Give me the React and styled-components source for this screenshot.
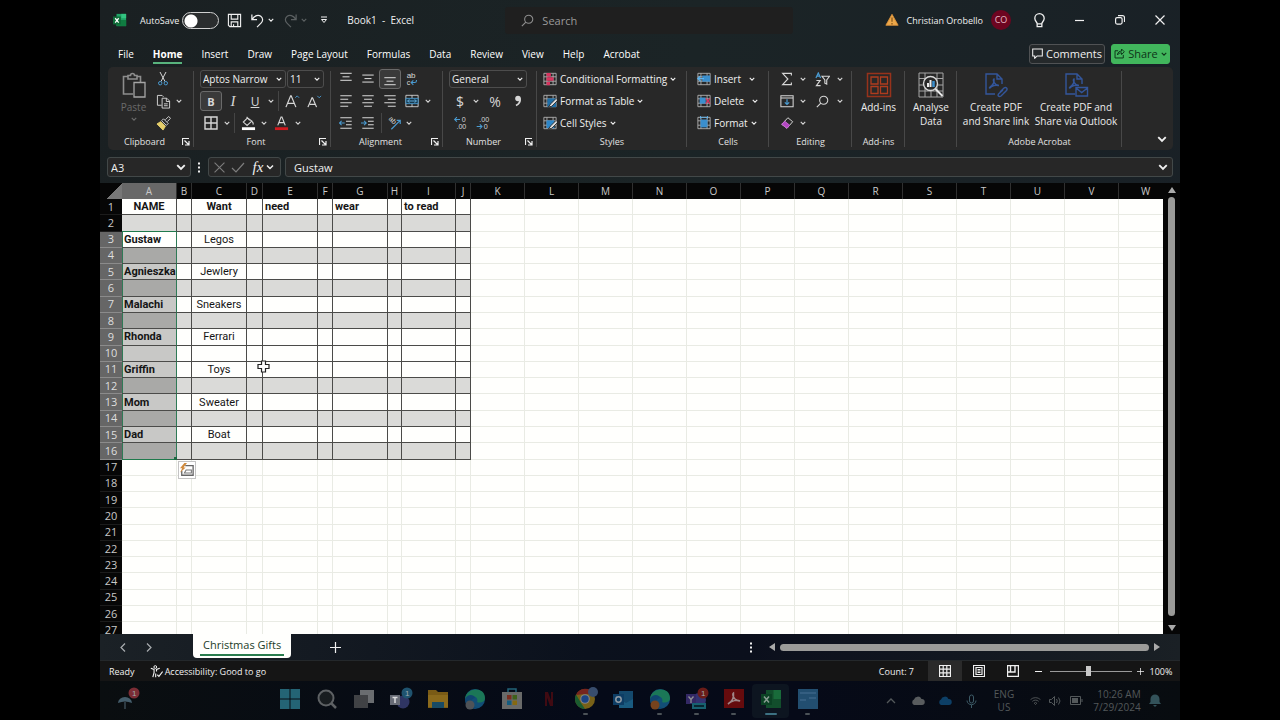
import React from "react";
import styled, { createGlobalStyle, css } from "styled-components";

const COLUMNS = [
  ["A", 55],
  ["B", 15],
  ["C", 55],
  ["D", 16],
  ["E", 55],
  ["F", 15],
  ["G", 55],
  ["H", 14],
  ["I", 54],
  ["J", 15],
  ..."KLMNOPQRSTUVW".split("").map((letter) => [letter, 54]),
];

const CELLS = {
  A1: "NAME",
  C1: "Want",
  E1: "need",
  G1: "wear",
  I1: "to read",
  A3: "Gustaw",
  C3: "Legos",
  A5: "Agnieszka",
  C5: "Jewlery",
  A7: "Malachi",
  C7: "Sneakers",
  A9: "Rhonda",
  C9: "Ferrari",
  A11: "Griffin",
  C11: "Toys",
  A13: "Mom",
  C13: "Sweater",
  A15: "Dad",
  C15: "Boat",
};

const ROWS = Array.from({ length: 27 }, (_, i) => i + 1);
const LAST_ROW = 16;
const isBanded = (row) => row % 2 === 0 && row !== 10 && row <= LAST_ROW;
const isSelected = (row) => row >= 3 && row <= LAST_ROW;

const TABS = [
  "File",
  "Home",
  "Insert",
  "Draw",
  "Page Layout",
  "Formulas",
  "Data",
  "Review",
  "View",
  "Help",
  "Acrobat",
];

/* ---------- icons ---------- */

const Icon = ({ size = 16, w, h, box = "0 0 16 16", children }) => (
  <svg
    width={w || size}
    height={h || size}
    viewBox={box}
    fill="none"
    stroke="currentColor"
    strokeWidth="1"
    aria-hidden="true"
  >
    {children}
  </svg>
);

const Chevron = ({ size = 6 }) => (
  <Icon size={size} box="0 0 8 8">
    <path d="M1 2.500l3 3 3-3" strokeWidth="1.500" />
  </Icon>
);

const ExcelIcon = ({ size = 14 }) => (
  <Icon size={size}>
    <g stroke="none">
      <path d="M4 1h11v14H4z" fill="#21a366" />
      <path d="M9.500 1H15v5H9.500z" fill="#33c481" />
      <path d="M4 8h11v7H4z" fill="#107c41" />
      <path d="M0 4h9v9H0z" fill="#0e6b38" />
    </g>
    <path d="M2.500 6l4 5M6.500 6l-4 5" stroke="#fff" strokeWidth="1.400" />
  </Icon>
);

const SaveIcon = () => (
  <Icon size={15}>
    <path d="M1.500 1.500h13v13H3l-1.500-1.500zM4.500 1.500v5h7v-5M4.500 14.500v-5h7v5M7 14.500v-2.500" strokeWidth="1.200" />
  </Icon>
);

const UndoIcon = ({ flip }) => (
  <Icon size={15}>
    <g transform={flip ? "translate(16 0) scale(-1 1)" : undefined}>
      <path d="M2 1.500v5.500h5.500M2.500 6.500C5 2.500 9 1.500 11.500 3.500s2.500 5 .5 7l-4.500 4.500" strokeWidth="1.300" />
    </g>
  </Icon>
);

const CustomizeIcon = () => (
  <Icon size={8} box="0 0 8 8">
    <path d="M1 1h6M1.500 3.500h5L4 6.500z" />
  </Icon>
);

const SearchIcon = ({ size = 13, flip }) => (
  <Icon size={size}>
    <g transform={flip ? "translate(16 0) scale(-1 1)" : undefined}>
      <circle cx="6.500" cy="6.500" r="5" strokeWidth="1.300" />
      <path d="M10 10l5 5" strokeWidth="1.400" />
    </g>
  </Icon>
);

const WarningIcon = () => (
  <Icon size={14}>
    <path d="M8 1.500L15 14H1z" fill="#eda84a" stroke="#d9913a" />
    <path d="M8 5v5M8 11.500V13" stroke="#8a5a1c" strokeWidth="1.500" />
  </Icon>
);

const BulbIcon = () => (
  <Icon size={15}>
    <path d="M5.500 11.500C5.500 9.500 3 9 3 5.700a5 5 0 0 1 10 0c0 3.300-2.500 3.800-2.500 5.800zM5.500 12v2.500h5V12" strokeWidth="1.400" />
  </Icon>
);

const MinimizeIcon = () => (
  <Icon size={10} box="0 0 10 10">
    <path d="M0 5.500h9" strokeWidth="1.200" />
  </Icon>
);

const RestoreIcon = () => (
  <Icon size={10} box="0 0 10 10">
    <rect x="0.600" y="2.600" width="6.500" height="6.500" rx="1.500" strokeWidth="1.200" />
    <path d="M3 .7h4.500a2 2 0 0 1 2 2V7" strokeWidth="1.200" />
  </Icon>
);

const CloseIcon = () => (
  <Icon size={10} box="0 0 10 10">
    <path d="M.5.500l9 9M9.500.500l-9 9" strokeWidth="1.200" />
  </Icon>
);

const CommentIcon = () => (
  <Icon size={11}>
    <path d="M1 1.500h14v10H7.500L4 15v-3.500H1z" strokeWidth="1.500" />
  </Icon>
);

const ShareIcon = () => (
  <Icon size={11}>
    <path d="M6 4H1.500v10.500h12V10M5 10c.5-4 3-5.500 6-5.500V1.500L15 5.500 11 9.500V7C8.500 7 6.500 8 5 10z" strokeWidth="1.400" />
  </Icon>
);

const PasteIcon = () => (
  <Icon w={24} h={26} box="0 0 24 26">
    <path d="M11 22H1.500V4.500H6M15 4.500h3.500V10M6 7V3.500h2.500a2 2 0 0 1 4 0H15V7z" stroke="#8d8d8d" strokeWidth="1.600" />
    <path d="M12 10.500h11V25H12z" stroke="#a5a5a5" strokeWidth="1.300" />
  </Icon>
);

const CutIcon = () => (
  <Icon w={10} h={14} box="0 0 10 14">
    <path d="M2 0l5 9.500M8 0L3 9.500" />
    <circle cx="2.200" cy="11.200" r="1.700" stroke="#4a9bd1" />
    <circle cx="7.800" cy="11.200" r="1.700" stroke="#4a9bd1" />
  </Icon>
);

const CopyIcon = () => (
  <Icon size={15}>
    <path d="M6 12H1.500V1.500h5L8 3M6.500 4.500h5l3 3v7.500h-8zM11 4.500V8h3.500M8.500 10.500h4M8.500 12.500h4" />
  </Icon>
);

const PainterIcon = () => (
  <Icon size={15}>
    <path d="M1 8.500l4-2.500 5 5-2.500 4z" fill="#e6cf6b" stroke="#e6cf6b" />
    <path d="M6 5l2-2 5 5-2 2zM10 4l3.500-3.500 2 2L12 6" />
  </Icon>
);

const LauncherIcon = () => (
  <Icon size={8} box="0 0 8 8">
    <path d="M7 .5H.5V7M2.500 2.500l4 4M7 3v4H3" strokeWidth="1.200" />
  </Icon>
);

const BorderIcon = () => (
  <Icon size={14} box="0 0 14 14">
    <path d="M1 1h12v12H1zM7 1v12M1 7h12" strokeWidth="1.400" />
  </Icon>
);

const FillIcon = () => (
  <Icon size={15}>
    <path d="M7 2L2.500 6.500 6.500 10l5-4.500zM6 1l3 3.500M12 6c1 1.500 1.500 2.500.500 3" strokeWidth="1.200" />
    <path d="M1 13.500h14" stroke="#fff" strokeWidth="3" />
  </Icon>
);

const FontColorIcon = () => (
  <Icon size={15}>
    <path d="M4 10L7.500 1h1L12 10M5.500 7h5" strokeWidth="1.200" />
    <path d="M1 13.500h14" stroke="#d11a1f" strokeWidth="3" />
  </Icon>
);

const FontSizeIcon = ({ grow }) => (
  <Icon size={15}>
    {grow ? (
      <path d="M1 14L6 2h.6l5 12M3 10h6.500" strokeWidth="1.300" />
    ) : (
      <path d="M1 14L5.300 4h.6l4.300 10M3 11h5.500" strokeWidth="1.300" />
    )}
    <path d={grow ? "M11 4l2-2 2 2" : "M11 2l2 2 2-2"} stroke="#4a9bd1" />
  </Icon>
);

// y of each line of text in the alignment icons
const LINES = {
  top: [1.5, 5.5, 9.5],
  middle: [3.5, 7.5, 11.5],
  bottom: [6.5, 10.5, 14.5],
};

const VAlignIcon = ({ at }) => (
  <Icon size={14}>
    {LINES[at].map((y, i) => (
      <path key={y} d={i === 1 ? `M4 ${y}h8` : `M1.500 ${y}h13`} strokeWidth="1.200" />
    ))}
  </Icon>
);

const HAlignIcon = ({ x }) => (
  <Icon size={14}>
    <path d={`M1.500 2h13M${x} 6h9M1.500 10h13M${x} 14h9`} strokeWidth="1.200" />
  </Icon>
);

const IndentIcon = ({ right }) => (
  <Icon size={14}>
    <path d="M1.500 2h13M8 6h6.500M8 10h6.500M1.500 14h13" strokeWidth="1.200" />
    <path d={right ? "M0 8h6M3.500 5.500L6 8l-2.500 2.500" : "M6.500 8h-6M3 5.500L.500 8 3 10.500"} stroke="#4a9bd1" strokeWidth="1.200" />
  </Icon>
);

const SvgText = styled.text`
  font-family: "Liberation Sans", sans-serif;
  font-size: ${(p) => p.$size}px;
  fill: currentColor;
  stroke: none;
`;

const WrapIcon = () => (
  <Icon w={14} h={16} box="0 0 14 18">
    <SvgText x="1" y="8" $size={9}>ab</SvgText>
    <SvgText x="1" y="16" $size={8}>c</SvgText>
    <path d="M12 10v1q0 2-2 2H6M8.500 10.500L6 13l2.500 2.500" stroke="#4a9bd1" strokeWidth="1.200" />
  </Icon>
);

const MergeIcon = () => (
  <Icon size={14}>
    <path d="M1 1.500h14v13H1zM8 1.500V5M8 11v3.500" />
    <path d="M1 5h14v6H1z" stroke="#4a9bd1" fill="#17384c" />
    <path d="M3 8h10M5 6L3 8l2 2M11 6l2 2-2 2" stroke="#6ab9ec" />
  </Icon>
);

const OrientationIcon = () => (
  <Icon size={16} box="0 0 18 18">
    <g transform="rotate(45 6 7)">
      <SvgText x="2" y="8" $size={8}>ab</SvgText>
    </g>
    <path d="M6 16L16 6M12 6h4v4" stroke="#4a9bd1" strokeWidth="1.300" />
  </Icon>
);

const DecimalIcon = ({ more }) => (
  <Icon size={16} box="0 0 16 18">
    <SvgText x={more ? 10 : 5} y="8" $size={8}>{more ? "0" : ".00"}</SvgText>
    <SvgText x={more ? 4 : 10} y="16" $size={8}>{more ? ".00" : "0"}</SvgText>
    <path d={more ? "M8 5H2M4.500 2.500L2 5l2.500 2.500" : "M2 13h6M5.500 10.500L8 13l-2.500 2.500"} stroke="#4a9bd1" strokeWidth="1.200" />
  </Icon>
);

const CommaIcon = () => (
  <Icon w={8} h={12} box="0 0 8 12">
    <circle cx="4" cy="3.500" r="2.800" fill="currentColor" stroke="none" />
    <path d="M6 3.500c.5 3-1 5.500-4 7" strokeWidth="1.800" />
  </Icon>
);

const GRID_MARKS = {
  conditional: <path d="M4 1h5v4H4zM4 6h8v4H4zM4 11h4v4H4z" fill="#d8345f" stroke="none" />,
  table: (
    <>
      <path d="M5 5h10v10H5z" fill="#1f6fa8" stroke="none" />
      <path d="M15 5L9 11l-3 4 4-1 6-6" fill="#ddd" stroke="#282828" />
    </>
  ),
  styles: (
    <>
      <path d="M4 5h9v9H4z" fill="#2d86c8" stroke="none" />
      <path d="M15 5L9 11l-3 4 4-1 6-6" fill="#ddd" stroke="#282828" />
    </>
  ),
  insert: (
    <>
      <path d="M6 4h9v7H6z" fill="#3b8fce" stroke="none" />
      <path d="M8 7.500H1M4 4.500l-3 3 3 3" stroke="#5fb4ee" strokeWidth="1.500" />
    </>
  ),
  remove: (
    <>
      <path d="M3 4h7v7H3z" fill="#3b8fce" stroke="none" />
      <path d="M10 5l5 6M15 5l-5 6" stroke="#d8345f" strokeWidth="1.400" />
    </>
  ),
  format: (
    <>
      <path d="M4 4h8v9H4z" fill="#3b8fce" stroke="none" />
      <path d="M4 0v3M12 0v3M4 1.500h8" stroke="#5fb4ee" />
    </>
  ),
};

const GridIcon = ({ kind }) => (
  <Icon size={14}>
    <path d="M1 1.500h14v13H1zM1 5.500h14M1 10.500h14M4.500 1.500v13M11.500 1.500v13" stroke="#b5b5b5" />
    {GRID_MARKS[kind]}
  </Icon>
);

const SumIcon = () => (
  <Icon size={14}>
    <path d="M13 4V1.500H3L9 8l-6 6.500h10V12" strokeWidth="1.300" />
  </Icon>
);

const FillDownIcon = () => (
  <Icon size={14}>
    <path d="M1 2h14v12.500H1zM1 4.500h14" strokeWidth="1.200" />
    <path d="M8 6v6M5.500 9.500L8 12l2.500-2.500" stroke="#4a9bd1" strokeWidth="1.400" />
  </Icon>
);

const EraserIcon = () => (
  <Icon size={14}>
    <path d="M9 2l5.500 4.500L8 14 2 9.500z" strokeWidth="1.100" />
    <path d="M5.500 6L11 10.500 8 14 2 9.500z" fill="#b347c2" stroke="#c869d4" />
  </Icon>
);

const SortIcon = () => (
  <Icon size={15}>
    <path d="M1 6.500L3.500 1 6 6.500M2 4.500h3" stroke="#4a9bd1" strokeWidth="1.300" />
    <path d="M1.500 9h4l-4 5.500h4.500M7.500 4.500h8l-3 4v4.500l-2-1v-3.500z" strokeWidth="1.200" />
  </Icon>
);

const AddInsIcon = () => (
  <Icon size={26} box="0 0 26 26">
    <path d="M1.500 1.500h23v23h-23z" stroke="#97321b" strokeWidth="1.500" />
    <path d="M5 5h7v7H5zM14.500 5h7v7h-7zM5 14.500h7v7H5zM14.500 14.500h7v7h-7z" stroke="#b03c1e" strokeWidth="1.300" />
  </Icon>
);

const AnalyseIcon = () => (
  <Icon size={26} box="0 0 26 26">
    <path d="M1 1h24v24H1zM1 6.500h24M1 13h24M1 19h24M7 1v24M19 1v24M13 19v6" stroke="#a5a5a5" />
    <circle cx="12.500" cy="11.500" r="7" fill="#282828" stroke="#d8d8d8" strokeWidth="1.400" />
    <path d="M10 15v-4M12.500 15V8" strokeWidth="2" />
    <path d="M15.500 15V9" stroke="#3b8fce" strokeWidth="2.500" />
    <path d="M17.500 17l7 7" stroke="#e8e8e8" strokeWidth="2" />
  </Icon>
);

const PdfIcon = ({ mail }) => (
  <Icon size={26} box="0 0 26 26">
    <g stroke="#33569b" strokeWidth="1.400">
      <path d="M12 22H3V2h11l5 5v5M14 2v5h5" />
      <path d="M7 15c3-2 4.500-5 4-8-1.500 0-.500 6 5 6.500M7 15c-1.500 1.500.5 1.500 1.500-.500 2-1 5-1.500 7-1" />
      {mail ? (
        <path d="M13 15.500h11.500V24H13zM13 16l5.700 4.500 5.800-4.500" />
      ) : (
        <path d="M17 20l4-4c2-1.500 4 .5 2.500 2.500L20 22M20 18l-4 3.500c-2 2 0 4 2 2.500l3-3" />
      )}
    </g>
  </Icon>
);

const CancelIcon = () => (
  <Icon size={11} box="0 0 10 10">
    <path d="M.5.500l9 9M9.500.500l-9 9" stroke="#7d7d7d" />
  </Icon>
);

const CheckIcon = () => (
  <Icon w={14} h={11} box="0 0 14 11">
    <path d="M1 6l4 4 8-9" stroke="#7d7d7d" strokeWidth="1.200" />
  </Icon>
);

const DotsIcon = () => (
  <Icon w={3} h={11} box="0 0 3 11">
    <path d="M0 1.500h2M0 5.500h2M0 9.500h2" strokeWidth="2" />
  </Icon>
);

const PlusIcon = ({ size = 11 }) => (
  <Icon size={size} box="0 0 11 11">
    <path d="M5.500 0v11M0 5.500h11" strokeWidth="1.200" />
  </Icon>
);

const AngleIcon = ({ right }) => (
  <Icon w={6} h={9} box="0 0 6 9">
    <path d={right ? "M1 .5l4 4-4 4" : "M5 .5l-4 4 4 4"} strokeWidth="1.200" />
  </Icon>
);

const AccessibilityIcon = () => (
  <Icon size={13}>
    <circle cx="6.500" cy="2.500" r="1.700" strokeWidth="1.200" />
    <path d="M1 4l4 1.500v4L3.500 15M12 4L8 5.500V8M7 10.500v4.500M9 12l2 2 4.500-6" strokeWidth="1.400" />
  </Icon>
);

const NormalViewIcon = () => (
  <Icon size={12} box="0 0 12 12">
    <path d="M.5.500h11v11H.500zM.500 4.200h11M.500 7.800h11M4.200.500v11M7.800.500v11" strokeWidth="1.200" />
  </Icon>
);

const PageViewIcon = () => (
  <Icon size={12} box="0 0 12 12">
    <path d="M.5.500h11v11H.500zM3 2.500h6v7H3zM4.500 4.500h3M4.500 6h3M4.500 7.500h3" strokeWidth="1.200" />
  </Icon>
);

const BreakViewIcon = () => (
  <Icon size={12} box="0 0 12 12">
    <path d="M.5.500h11v11H.500zM3.500.500V7H8V.500M.500 7h3" strokeWidth="1.400" />
  </Icon>
);

const QuickIcon = () => (
  <Icon size={14}>
    <path d="M6 3h9v11H2V9" stroke="#666" strokeWidth="1.500" />
    <path d="M5 11.500l2-3.500h6v3.500z" stroke="#777" strokeWidth="1.200" />
    <path d="M5 0L0 6h2.500L0 11l6.500-6H4L8 0z" fill="#d08a3c" stroke="none" />
  </Icon>
);

const CrossIcon = () => (
  <Icon size={13} box="0 0 13 13">
    <path d="M4.500 1h4v3.500H12v4H8.500V12h-4V8.500H1v-4h3.500z" fill="#fff" stroke="#222" strokeWidth="1.200" />
  </Icon>
);

/* ---------- taskbar icons ---------- */

const Badge = ({ x, fill, children }) => (
  <>
    <circle cx={x} cy="6" r="5.500" fill={fill} stroke="none" />
    <SvgText x={x - 2} y="9" $size={8}>{children}</SvgText>
  </>
);

const TaskSvg = ({ children }) => (
  <Icon size={24} box="0 0 24 24">
    <g stroke="none">{children}</g>
  </Icon>
);

const WeatherIcon = () => (
  <TaskSvg>
    <path d="M1 16a7 6 0 0 1 14 0q-7-3-14 0z" fill="#4f6b7b" />
    <path d="M7 14h2v8H7z" fill="#34424b" />
    <Badge x={17} fill="#8f333c">1</Badge>
  </TaskSvg>
);

const EdgeIcon = ({ mark }) => (
  <TaskSvg>
    <circle cx="12" cy="12" r="10" fill="#155a87" />
    <path d="M2 12C3 0 22-1 22 11c0 5-6 5-8 4 2-4-3-9-12-3z" fill="#1f8a63" />
    <path d="M2 12c2-5 9-5 10-1-5 1-5 7 2 10C7 23 2 19 2 12z" fill="#12507f" />
    <circle cx="7" cy="18" r="4.500" fill={mark} />
  </TaskSvg>
);

const TASKS = [
  {
    name: "Start",
    icon: (
      <TaskSvg>
        <path d="M2 2h9.500v9.500H2zM12.500 2H22v9.500h-9.500zM2 12.500h9.500V22H2zM12.500 12.500H22V22h-9.500z" fill="#2a7487" />
      </TaskSvg>
    ),
  },
  {
    name: "Search",
    icon: (
      <TaskSvg>
        <circle cx="11" cy="11" r="7.500" fill="#1c2023" stroke="#6d7072" strokeWidth="2" />
        <path d="M16 16l5 5" stroke="#6d7072" strokeWidth="2.500" />
      </TaskSvg>
    ),
  },
  {
    name: "Task View",
    icon: (
      <TaskSvg>
        <path d="M8 3h14v13H8z" fill="#7c7f81" />
        <path d="M2 8h14v13H2z" fill="#4b4c4e" />
      </TaskSvg>
    ),
  },
  {
    name: "Teams",
    icon: (
      <TaskSvg>
        <circle cx="14" cy="15" r="6.500" fill="#373d71" />
        <path d="M1 8h10v10H1z" fill="#7a7d88" />
        <path d="M3.500 10.500h5M6 10.500V16" stroke="#fff" strokeWidth="1.500" />
        <Badge x={18} fill="#24607f">1</Badge>
      </TaskSvg>
    ),
  },
  {
    name: "File Explorer",
    icon: (
      <TaskSvg>
        <path d="M2 3h8l2 2h10v16H2z" fill="#8f6916" />
        <path d="M2 8h20v12H2z" fill="#a37b1e" />
        <path d="M6 15h12v6H6z" fill="#1c5672" />
      </TaskSvg>
    ),
  },
  { name: "Edge", icon: <EdgeIcon mark="#5c6063" /> },
  {
    name: "Microsoft Store",
    icon: (
      <TaskSvg>
        <path d="M8 5V2h8v3" stroke="#28748a" strokeWidth="1.500" />
        <path d="M2 5h20v17H2z" fill="#7b7b78" />
        <path d="M7 8h4.500v4.500H7z" fill="#8e3320" />
        <path d="M12.500 8H17v4.500h-4.500z" fill="#49701c" />
        <path d="M7 13.500h4.500V18H7z" fill="#176b93" />
        <path d="M12.500 13.500H17V18h-4.500z" fill="#9c7a10" />
      </TaskSvg>
    ),
  },
  {
    name: "Netflix",
    icon: (
      <TaskSvg>
        <path d="M8 5h3l5 14h-3zM8 5h2v14H8zM14 5h2v14h-2z" fill="#4b0b12" />
      </TaskSvg>
    ),
  },
  {
    name: "Chrome",
    open: true,
    icon: (
      <TaskSvg>
        <circle cx="11" cy="12" r="10" fill="#8d7118" />
        <path d="M2 8a10 10 0 0 1 18-1H11z" fill="#8a2a20" />
        <path d="M2 7.500l5 8.500 4 5.900A10 10 0 0 1 2 7.500z" fill="#1e6b35" />
        <circle cx="11" cy="12" r="4.800" fill="#999" />
        <circle cx="11" cy="12" r="3.700" fill="#1f4f98" />
        <circle cx="19" cy="5" r="5" fill="#42597c" />
      </TaskSvg>
    ),
  },
  {
    name: "Outlook",
    icon: (
      <TaskSvg>
        <path d="M8 4h14v16H8z" fill="#17557c" />
        <path d="M8 12l7 4 7-4v9H8z" fill="#1d6a93" />
        <path d="M2 7h11v11H2z" fill="#0f4673" />
        <circle cx="7.500" cy="12.500" r="2.700" stroke="#a9b4bd" strokeWidth="1.500" />
      </TaskSvg>
    ),
  },
  { name: "Edge Profile", open: true, icon: <EdgeIcon mark="#8a4e1e" /> },
  {
    name: "Teams New",
    open: true,
    icon: (
      <TaskSvg>
        <circle cx="14" cy="13" r="7" fill="#3c3a80" />
        <path d="M1 7h10v10H1z" fill="#3c2e72" />
        <path d="M3.500 9.500l2.500 3 2.500-3M6 12v4" stroke="#aaa" strokeWidth="1.300" />
        <path d="M7 16h14v6H7z" fill="#1b7180" />
        <path d="M9 19h10" stroke="#0a2c35" strokeWidth="2" />
        <Badge x={18} fill="#7c2019">1</Badge>
      </TaskSvg>
    ),
  },
  {
    name: "Acrobat",
    open: true,
    icon: (
      <TaskSvg>
        <path d="M2 2h20v19H2z" fill="#760c0c" />
        <path d="M6 17c5-3 6-7 5.500-11C9.500 7 12 14 18 14c-3-1.500-8-.500-12 3z" stroke="#bb9d9d" strokeWidth="1.500" />
      </TaskSvg>
    ),
  },
  {
    name: "Excel",
    open: true,
    current: true,
    icon: (
      <TaskSvg>
        <path d="M7 3h15v18H7z" fill="#14592f" />
        <path d="M14.500 3H22v9h-7.500z" fill="#1c7a3f" />
        <path d="M2 7h11v11H2z" fill="#0b4a25" />
        <path d="M5 9.500l5 6M10 9.500l-5 6" stroke="#9db3a5" strokeWidth="1.500" />
      </TaskSvg>
    ),
  },
  {
    name: "Notes",
    open: true,
    icon: (
      <TaskSvg>
        <path d="M2 2h20v20H2z" fill="#275a80" />
        <path d="M4 13h6M13 11h7M4 6h16" stroke="#46749a" strokeWidth="1.500" />
      </TaskSvg>
    ),
  },
];

/* ---------- page ---------- */

const GlobalStyle = createGlobalStyle`
  * {
    box-sizing: border-box;
  }
  body {
    margin: 0;
    background: #000;
    color: #f0f0f0;
    font-family: "Open Sans", "Noto Sans", sans-serif;
    font-size: 10px;
  }
  button, input, select {
    font: inherit;
    color: inherit;
    background: none;
    border: 0;
    padding: 0;
    margin: 0;
    outline: none;
  }
  svg {
    display: block;
    flex: none;
  }
`;

const Page = styled.div`
  height: 100vh;
  padding: 0 100px;
`;

const Window = styled.div`
  height: 100%;
  display: flex;
  flex-direction: column;
  overflow: hidden;
  background: linear-gradient(100deg, #1a2022, #1b2426 50%, #192026);
`;

const TitleBar = styled.header`
  display: flex;
  align-items: center;
  height: 40px;
  padding-left: 13px;
`;

const PlainButton = styled.button`
  display: flex;
  align-items: center;
  justify-content: center;
  gap: 3px;
  flex: none;
  width: ${(p) => (p.$width ? `${p.$width}px` : "auto")};
  opacity: ${(p) => (p.$dim ? 0.3 : 1)};
`;

const AutoSave = styled.label`
  display: flex;
  align-items: center;
  gap: 3px;
  margin: 0 7px 0 13px;
  font-size: 9px;
`;

const Toggle = styled.input`
  appearance: none;
  width: 37px;
  height: 17px;
  border: 1px solid #d0d0d0;
  border-radius: 9px;
  background: radial-gradient(circle at 8px 8px, #fff 6px, #2a2d2e 7px);
`;

const BookTitle = styled.span`
  margin-left: 7px;
  font-size: 10px;
  white-space: pre;
`;

const SearchBox = styled.label`
  display: flex;
  align-items: center;
  gap: 8px;
  width: 288px;
  height: 27px;
  margin-left: auto;
  padding: 0 16px;
  border-radius: 3px;
  background: #1f1f1f;
  color: #8f8f8f;
  font-size: 11px;

  input {
    flex: 1;
    min-width: 0;
  }
  input::placeholder {
    color: #9a9a9a;
  }
`;

const Account = styled.div`
  display: flex;
  align-items: center;
  gap: 8px;
  margin-left: auto;
  font-size: 9px;
`;

const Avatar = styled.span`
  width: 20px;
  height: 20px;
  border-radius: 50%;
  background: #6d0520;
  color: #e6b9c2;
  line-height: 20px;
  text-align: center;
`;

const WindowButtons = styled.div`
  display: flex;
  margin-left: 9px;
`;

const TabBar = styled.nav`
  display: flex;
  align-items: center;
  height: 27px;
  padding: 0 10px 0 18px;
`;

const TabList = styled.div`
  display: flex;
  gap: 19px;
  padding-top: 2px;
`;

const Tab = styled.a`
  color: #fff;
  text-decoration: none;
  line-height: 16px;
  border-bottom: 2px solid transparent;
  font-size: 10px;
  ${(p) =>
    p.$active &&
    css`
      font-weight: 700;
      border-color: #58b37d;
    `}
`;

const TabActions = styled.div`
  display: flex;
  gap: 6px;
  margin-left: auto;
`;

const ActionButton = styled.button`
  display: flex;
  align-items: center;
  justify-content: center;
  gap: 3px;
  width: ${(p) => p.$width}px;
  height: 20px;
  border: 1px solid ${(p) => (p.$green ? "#41b65c" : "#505254")};
  border-radius: 3px;
  background: ${(p) => (p.$green ? "#41b65c" : "#25292b")};
  color: ${(p) => (p.$green ? "#0d3318" : "#f0f0f0")};
  font-size: 11px;
`;

const Ribbon = styled.section`
  display: flex;
  height: 83px;
  margin: 0 7px 0 8px;
  border-radius: 5px;
  background: #282828;
`;

const Group = styled.div`
  position: relative;
  display: flex;
  flex-direction: column;
  flex: none;
  width: ${(p) => p.$width}px;
  padding-top: 1px;
  background: linear-gradient(#484848, #484848) right 4px / 1px 76px no-repeat;
`;

const GroupBody = styled.div`
  display: flex;
  flex: 1;
  padding-left: ${(p) => p.$pad || 4}px;
`;

const Stack = styled.div`
  display: flex;
  flex-direction: column;
`;

const Line = styled.div`
  display: flex;
  align-items: center;
  height: 22px;
  gap: ${(p) => p.$gap || 0}px;
`;

const Caption = styled.div`
  display: flex;
  justify-content: center;
  height: 16px;
  padding-right: ${(p) => (p.$launcher ? 13 : 0)}px;
  line-height: 16px;
  font-size: 9px;
  color: #e2e2e2;
`;

const Launcher = styled.button`
  position: absolute;
  right: 4px;
  bottom: 4px;
`;

const Tool = styled.button`
  display: flex;
  align-items: center;
  justify-content: center;
  width: ${(p) => p.$width || 22}px;
  height: 20px;
  border: 1px solid ${(p) => (p.$pressed ? "#6a6a6a" : "transparent")};
  border-radius: 3px;
  background: ${(p) => (p.$pressed ? "#3a3a3a" : "none")};
  color: #d6d6d6;
  font-size: ${(p) => p.$font || 12}px;
  font-weight: ${(p) => (p.$bold ? 700 : 400)};
`;

const Divider = styled.span`
  width: 1px;
  height: 20px;
  margin: 0 2px;
  background: #454545;
`;

const BigTool = styled.button`
  display: flex;
  flex-direction: column;
  align-items: center;
  gap: 2px;
  width: ${(p) => p.$width}px;
  padding-top: 4px;
  line-height: 14px;
  font-size: 10px;
  color: ${(p) => (p.$dim ? "#6b6b6b" : "#ececec")};
`;

const TextTool = styled.button`
  display: flex;
  align-items: center;
  gap: 3px;
  height: 22px;
  width: ${(p) => (p.$width ? `${p.$width}px` : "auto")};
  font-size: 10px;

  svg:last-child {
    margin-left: ${(p) => (p.$width ? "auto" : 0)};
  }
`;

const Picker = styled.span`
  position: relative;
  display: flex;
  align-items: center;
  width: ${(p) => p.$width}px;
  height: 18px;
  border: 1px solid #4d4d4d;
  border-radius: 3px;
  font-size: 10px;

  select {
    appearance: none;
    width: 100%;
    height: 16px;
    padding: 0 12px 0 2px;
  }
  svg {
    position: absolute;
    right: 3px;
    pointer-events: none;
  }
`;

const Spacer = styled.span`
  flex: 1;
`;

const RibbonEnd = styled.div`
  display: flex;
  flex: 1;
  align-items: flex-end;
  justify-content: flex-end;
  padding: 0 6px 6px 0;
`;

const FormulaBar = styled.div`
  display: flex;
  align-items: center;
  gap: 4px;
  height: 20px;
  margin: 7px 7px 6px;
`;

const Field = styled.div`
  display: flex;
  align-items: center;
  gap: 6px;
  flex: ${(p) => (p.$width ? "none" : 1)};
  width: ${(p) => (p.$width ? `${p.$width}px` : "auto")};
  height: 20px;
  padding: 0 4px 0 ${(p) => p.$pad || 3}px;
  border: 1px solid #424848;
  border-radius: 3px;
  background: #272727;
  font-size: 11px;

  input {
    flex: 1;
    min-width: 0;
  }
`;

const DotsGap = styled.span`
  display: flex;
  justify-content: center;
  width: 9px;
`;

const Fx = styled.i`
  font-family: "Liberation Serif", serif;
  font-size: 15px;
  line-height: 16px;
`;

const Workspace = styled.main`
  display: flex;
  flex: 1;
  min-height: 0;
  background: #060606;
`;

const SheetView = styled.div`
  flex: 1;
  min-width: 0;
  overflow: hidden;
  background: #fffffd;
`;

const Sheet = styled.table`
  table-layout: fixed;
  border-collapse: separate;
  border-spacing: 0;
  width: 1073px;
  height: 456px;
  color: #151515;
  font-family: Roboto, "Open Sans", sans-serif;
  font-size: 11px;

  th,
  td {
    height: 16px;
    padding: 0;
    line-height: 14px;
  }
  td {
    padding-top: 1px;
  }
`;

const ColHead = styled.th`
  background: ${(p) => (p.$active ? "#686868" : "#060606")};
  border-right: 1px solid #303030;
  color: #c9c9c9;
  font-family: "Open Sans", sans-serif;
  font-size: 10px;
  font-weight: 400;
`;

const Corner = styled.th`
  background: linear-gradient(135deg, #060606 60%, #777 60%);
`;

const RowHead = styled.th`
  background: ${(p) => (p.$active ? "#666" : "#060606")};
  border-bottom: 1px solid ${(p) => (p.$active ? "#8b8b8b" : "#1c1c1c")};
  color: ${(p) => (p.$active ? "#dedede" : "#c9c9c9")};
  font-family: "Open Sans", sans-serif;
  font-size: 11px;
  font-weight: 400;
`;

const Cell = styled.td`
  position: relative;
  border-right: 1px solid ${(p) => (p.$table ? "#4b4b49" : "#e9ebe4")};
  border-bottom: 1px solid ${(p) => (p.$table ? "#4b4b49" : "#e9ebe4")};
  background: ${(p) => p.$fill};
  text-align: ${(p) => p.$align};
  font-weight: ${(p) => (p.$bold ? 700 : 400)};
  text-indent: ${(p) => (p.$align === "left" ? 2 : 0)}px;
  white-space: nowrap;
  ${(p) =>
    p.$selected &&
    css`
      border-right-color: #2f7a56;
      box-shadow: inset 1px 0 #2f7a56;
    `}
  ${(p) =>
    p.$edge &&
    css`
      border-bottom-color: #1f7a4c;
    `}
`;

const FillHandle = styled.span`
  position: absolute;
  right: -2px;
  bottom: -2px;
  width: 4px;
  height: 4px;
  background: #1d6b43;
`;

const QuickAnalysis = styled.button`
  position: absolute;
  z-index: 1;
  left: 56px;
  top: 18px;
  display: flex;
  align-items: center;
  justify-content: center;
  width: 18px;
  height: 18px;
  border: 1px solid #c4c4c4;
  background: #fff;
`;

const Pointer = styled.span`
  position: absolute;
  z-index: 1;
  left: -6px;
  top: -2px;
`;

const VScroll = styled.div`
  display: flex;
  flex-direction: column;
  align-items: center;
  gap: 4px;
  width: 17px;
  padding: 4px 0 3px;
`;

const Thumb = styled.div`
  flex: 1;
  width: ${(p) => (p.$flat ? "auto" : "7px")};
  height: ${(p) => (p.$flat ? "7px" : "auto")};
  margin-bottom: ${(p) => (p.$flat ? 0 : 5)}px;
  border-radius: 4px;
  background: #9b9b99;
`;

const Arrow = styled.span`
  border: 4px solid transparent;
  ${(p) => p.$dir === "up" && "border-bottom: 6px solid #aaa; border-top: 0;"}
  ${(p) => p.$dir === "down" && "border-top: 6px solid #aaa; border-bottom: 0;"}
  ${(p) => p.$dir === "left" && "border-right: 6px solid #aaa; border-left: 0;"}
  ${(p) => p.$dir === "right" && "border-left: 6px solid #aaa; border-right: 0;"}
`;

const SheetBar = styled.div`
  display: flex;
  align-items: center;
  height: 26px;
  padding-right: 20px;
  background: linear-gradient(90deg, #1b2126, #0b111d 45%, #0b0f1c 60%, #1a2025);
`;

const SheetNav = styled.div`
  display: flex;
  gap: 20px;
  width: 93px;
  padding-left: 20px;
  color: #a9adb0;
`;

const SheetTab = styled.button`
  align-self: flex-start;
  height: 24px;
  padding: 0 7px;
  border-radius: 0 0 4px 4px;
  background: #fffffd;
  color: #1b3b28;
  font-size: 11px;

  span {
    display: block;
    line-height: 18px;
    padding: 0 3px;
    border-bottom: 2px solid #2a7d4f;
  }
`;

const HScroll = styled.div`
  display: flex;
  align-items: center;
  gap: 5px;
  width: 391px;
  margin-left: 16px;
`;

const StatusBar = styled.footer`
  display: flex;
  align-items: center;
  height: 21px;
  padding: 0 2px 0 9px;
  border-top: 1px solid #24282b;
  background: #151515;
  font-size: 9px;
`;

const StatusItem = styled.span`
  display: flex;
  align-items: center;
  gap: 2px;
  margin-right: ${(p) => p.$after || 0}px;
`;

const ViewButton = styled.button`
  display: flex;
  align-items: center;
  justify-content: center;
  width: 34px;
  height: 20px;
  background: ${(p) => (p.$active ? "#2a2a2a" : "none")};
`;

const ZoomRange = styled.input`
  appearance: none;
  width: 82px;
  height: 12px;
  margin: 0 4px;
  background: linear-gradient(#9a9a9a, #9a9a9a) center / 100% 1px no-repeat;

  &::-webkit-slider-thumb {
    appearance: none;
    width: 5px;
    height: 10px;
    background: #c8c8c8;
  }
`;

const Taskbar = styled.div`
  display: flex;
  align-items: center;
  height: 39px;
  padding: 0 14px 0 10px;
  background: linear-gradient(90deg, #0a0e10, #050a18 45%, #060a18 65%, #080c10);
`;

const TaskButton = styled.button`
  display: flex;
  flex-direction: column;
  align-items: center;
  justify-content: center;
  gap: 2px;
  width: 37px;
  height: 34px;
  border-radius: 4px;
  background: ${(p) => (p.$current ? "#0d1520" : "none")};
  color: #b9c4c9;

  svg {
    opacity: 0.85;
  }
  &::after {
    content: "";
    width: ${(p) => (p.$current ? 12 : 5)}px;
    height: 2px;
    border-radius: 1px;
    background: ${(p) => (p.$current ? "#3c7182" : p.$open ? "#4b5257" : "none")};
  }
`;

const TaskList = styled.div`
  display: flex;
  margin-left: 124px;
`;

const Tray = styled.div`
  display: flex;
  align-items: center;
  margin-left: auto;
  color: #53585a;
  font-size: 10px;
  line-height: 13px;
`;

const TrayItem = styled.span`
  display: flex;
  justify-content: center;
  width: ${(p) => p.$width}px;
  text-align: ${(p) => p.$align || "center"};
`;

const Drop = ({ label, width = 10 }) => (
  <Tool $width={width} aria-label={label}>
    <Chevron />
  </Tool>
);

const RibbonGroup = ({ name, width, pad, launcher, children }) => (
  <Group $width={width}>
    <GroupBody $pad={pad}>{children}</GroupBody>
    <Caption $launcher={launcher}>{name}</Caption>
    {launcher && (
      <Launcher aria-label={`${name} settings`}>
        <LauncherIcon />
      </Launcher>
    )}
  </Group>
);

const Header = () => (
  <TitleBar>
    <ExcelIcon />
    <AutoSave>
      AutoSave
      <Toggle type="checkbox" />
    </AutoSave>
    <PlainButton $width={16} aria-label="Save">
      <SaveIcon />
    </PlainButton>
    <PlainButton $width={40} aria-label="Undo">
      <UndoIcon />
      <Chevron />
    </PlainButton>
    <PlainButton $width={26} $dim aria-label="Redo">
      <UndoIcon flip />
      <Chevron />
    </PlainButton>
    <PlainButton $width={32} aria-label="Customize toolbar">
      <CustomizeIcon />
    </PlainButton>
    <BookTitle>Book1  -  Excel</BookTitle>
    <SearchBox>
      <SearchIcon flip />
      <input type="text" placeholder="Search" aria-label="Search" />
    </SearchBox>
    <Account>
      <WarningIcon />
      Christian Orobello
      <Avatar>CO</Avatar>
    </Account>
    <WindowButtons>
      <PlainButton $width={40} aria-label="Tips">
        <BulbIcon />
      </PlainButton>
      <PlainButton $width={40} aria-label="Minimize">
        <MinimizeIcon />
      </PlainButton>
      <PlainButton $width={40} aria-label="Restore">
        <RestoreIcon />
      </PlainButton>
      <PlainButton $width={40} aria-label="Close">
        <CloseIcon />
      </PlainButton>
    </WindowButtons>
  </TitleBar>
);

const Tabs = () => (
  <TabBar>
    <TabList>
      {TABS.map((tab) => (
        <Tab key={tab} href="#" $active={tab === "Home"}>
          {tab}
        </Tab>
      ))}
    </TabList>
    <TabActions>
      <ActionButton $width={76}>
        <CommentIcon />
        Comments
      </ActionButton>
      <ActionButton $width={59} $green>
        <ShareIcon />
        Share
        <Chevron />
      </ActionButton>
    </TabActions>
  </TabBar>
);

const RibbonBar = () => (
  <Ribbon>
    <RibbonGroup name="Clipboard" width={86} pad={7} launcher>
      <BigTool $width={37} $dim>
        <PasteIcon />
        Paste
        <Chevron />
      </BigTool>
      <Stack>
        <Line>
          <Tool aria-label="Cut"><CutIcon /></Tool>
        </Line>
        <Line>
          <Tool aria-label="Copy"><CopyIcon /></Tool>
          <Drop label="Copy options" />
        </Line>
        <Line>
          <Tool aria-label="Format painter"><PainterIcon /></Tool>
        </Line>
      </Stack>
    </RibbonGroup>

    <RibbonGroup name="Font" width={137} pad={6} launcher>
      <Stack>
        <Line $gap={1}>
          <Picker $width={86}>
            <select aria-label="Font name">
              <option>Aptos Narrow</option>
            </select>
            <Chevron />
          </Picker>
          <Picker $width={37}>
            <select aria-label="Font size">
              <option>11</option>
            </select>
            <Chevron />
          </Picker>
        </Line>
        <Line>
          <Tool $pressed $bold $font={11}>B</Tool>
          <Tool aria-label="Italic"><Fx>I</Fx></Tool>
          <Tool aria-label="Underline"><u>U</u></Tool>
          <Drop label="Underline options" />
          <Divider />
          <Tool aria-label="Grow font"><FontSizeIcon grow /></Tool>
          <Tool aria-label="Shrink font"><FontSizeIcon /></Tool>
        </Line>
        <Line>
          <Tool aria-label="Borders"><BorderIcon /></Tool>
          <Drop label="Border options" />
          <Divider />
          <Tool aria-label="Fill color"><FillIcon /></Tool>
          <Drop label="Fill options" />
          <Tool $width={24} aria-label="Font color"><FontColorIcon /></Tool>
          <Drop label="Font color options" />
        </Line>
      </Stack>
    </RibbonGroup>

    <RibbonGroup name="Alignment" width={112} launcher>
      <Stack>
        <Line>
          <Tool aria-label="Top align"><VAlignIcon at="top" /></Tool>
          <Tool aria-label="Middle align"><VAlignIcon at="middle" /></Tool>
          <Tool $pressed aria-label="Bottom align"><VAlignIcon at="bottom" /></Tool>
          <Tool aria-label="Wrap text"><WrapIcon /></Tool>
        </Line>
        <Line>
          <Tool aria-label="Align left"><HAlignIcon x={1.5} /></Tool>
          <Tool aria-label="Center"><HAlignIcon x={3.5} /></Tool>
          <Tool aria-label="Align right"><HAlignIcon x={5.5} /></Tool>
          <Tool aria-label="Merge"><MergeIcon /></Tool>
          <Drop label="Merge options" />
        </Line>
        <Line>
          <Tool aria-label="Decrease indent"><IndentIcon /></Tool>
          <Tool aria-label="Increase indent"><IndentIcon right /></Tool>
          <Divider />
          <Tool $width={20} aria-label="Orientation"><OrientationIcon /></Tool>
          <Drop label="Orientation options" />
        </Line>
      </Stack>
    </RibbonGroup>

    <RibbonGroup name="Number" width={94} pad={6} launcher>
      <Stack>
        <Line>
          <Picker $width={78}>
            <select aria-label="Number format">
              <option>General</option>
            </select>
            <Chevron />
          </Picker>
        </Line>
        <Line>
          <Tool $font={14}>$</Tool>
          <Drop label="Currency options" />
          <Tool $width={28} $font={14}>%</Tool>
          <Tool $width={18} aria-label="Comma style"><CommaIcon /></Tool>
        </Line>
        <Line>
          <Tool aria-label="Increase decimal"><DecimalIcon more /></Tool>
          <Tool aria-label="Decrease decimal"><DecimalIcon /></Tool>
        </Line>
      </Stack>
    </RibbonGroup>

    <RibbonGroup name="Styles" width={150} pad={6}>
      <Stack>
        <TextTool><GridIcon kind="conditional" />Conditional Formatting<Chevron /></TextTool>
        <TextTool><GridIcon kind="table" />Format as Table<Chevron /></TextTool>
        <TextTool><GridIcon kind="styles" />Cell Styles<Chevron /></TextTool>
      </Stack>
    </RibbonGroup>

    <RibbonGroup name="Cells" width={82} pad={10}>
      <Stack>
        <TextTool $width={58}><GridIcon kind="insert" />Insert<Chevron /></TextTool>
        <TextTool $width={61}><GridIcon kind="remove" />Delete<Chevron /></TextTool>
        <TextTool $width={58}><GridIcon kind="format" />Format<Chevron /></TextTool>
      </Stack>
    </RibbonGroup>

    <RibbonGroup name="Editing" width={83} pad={7}>
      <Stack>
        <Line>
          <Tool aria-label="Sum"><SumIcon /></Tool>
          <Drop label="Sum options" />
          <Tool $width={28} aria-label="Sort and filter"><SortIcon /></Tool>
          <Drop label="Sort options" width={8} />
        </Line>
        <Line>
          <Tool aria-label="Fill"><FillDownIcon /></Tool>
          <Drop label="Fill direction" />
          <Tool $width={28} aria-label="Find"><SearchIcon flip /></Tool>
          <Drop label="Find options" width={8} />
        </Line>
        <Line>
          <Tool aria-label="Clear"><EraserIcon /></Tool>
          <Drop label="Clear options" />
        </Line>
      </Stack>
    </RibbonGroup>

    <RibbonGroup name="Add-ins" width={53}>
      <BigTool $width={45}>
        <AddInsIcon />
        Add-ins
      </BigTool>
    </RibbonGroup>

    <RibbonGroup width={52}>
      <BigTool $width={44}>
        <AnalyseIcon />
        Analyse Data
      </BigTool>
    </RibbonGroup>

    <RibbonGroup name="Adobe Acrobat" width={165} pad={1}>
      <BigTool $width={76}>
        <PdfIcon />
        <span>Create PDF<br />and Share link</span>
      </BigTool>
      <BigTool $width={84}>
        <PdfIcon mail />
        <span>Create PDF and<br />Share via Outlook</span>
      </BigTool>
    </RibbonGroup>

    <RibbonEnd>
      <PlainButton aria-label="Collapse ribbon">
        <Chevron size={10} />
      </PlainButton>
    </RibbonEnd>
  </Ribbon>
);

const Formula = () => (
  <FormulaBar>
    <Field $width={84}>
      <input type="text" defaultValue="A3" aria-label="Name box" />
      <Chevron size={10} />
    </Field>
    <DotsGap>
      <DotsIcon />
    </DotsGap>
    <Field $width={73} $pad={5}>
      <PlainButton aria-label="Cancel"><CancelIcon /></PlainButton>
      <PlainButton aria-label="Enter"><CheckIcon /></PlainButton>
      <PlainButton $width={25} aria-label="Insert function">
        <Fx>fx</Fx>
        <Chevron size={8} />
      </PlainButton>
    </Field>
    <Field $pad={8}>
      <input type="text" defaultValue="Gustaw" aria-label="Formula" />
      <Chevron size={10} />
    </Field>
  </FormulaBar>
);

const cellFill = (letter, row) => {
  if (letter === "A" && row > 3 && isSelected(row)) {
    return isBanded(row) ? "#a9a9a7" : "#c8c8c6";
  }
  return isBanded(row) ? "#dadad8" : "#fffffd";
};

const Grid = () => (
  <Sheet>
    <colgroup>
      <col width="22" />
      {COLUMNS.map(([letter, width]) => (
        <col key={letter} width={width} />
      ))}
    </colgroup>
    <thead>
      <tr>
        <Corner />
        {COLUMNS.map(([letter]) => (
          <ColHead key={letter} scope="col" $active={letter === "A"}>
            {letter}
          </ColHead>
        ))}
      </tr>
    </thead>
    <tbody>
      {ROWS.map((row) => (
        <tr key={row}>
          <RowHead scope="row" $active={isSelected(row)}>
            {row}
          </RowHead>
          {COLUMNS.map(([letter], i) => {
            const inTable = i < 10 && row <= LAST_ROW;
            const inA = letter === "A";
            return (
              <Cell
                key={letter}
                $table={inTable}
                $fill={inTable ? cellFill(letter, row) : "#fffffd"}
                $align={letter === "C" || (inA && row === 1) ? "center" : "left"}
                $bold={inA || row === 1}
                $selected={inA && isSelected(row)}
                $edge={inA && (row === 2 || row === LAST_ROW)}
              >
                {CELLS[letter + row]}
                {inA && row === LAST_ROW && (
                  <>
                    <FillHandle />
                    <QuickAnalysis aria-label="Quick analysis">
                      <QuickIcon />
                    </QuickAnalysis>
                  </>
                )}
                {letter === "E" && row === 11 && (
                  <Pointer>
                    <CrossIcon />
                  </Pointer>
                )}
              </Cell>
            );
          })}
        </tr>
      ))}
    </tbody>
  </Sheet>
);

const SystemTray = () => (
  <Tray>
    <TrayItem $width={26}>
      <Icon size={10} box="0 0 10 10"><path d="M1 7l4-4 4 4" strokeWidth="1.300" /></Icon>
    </TrayItem>
    <TrayItem $width={27}>
      <Icon w={14} h={9} box="0 0 14 9"><path d="M3 9a3 3 0 0 1 0-5.500 4 4 0 0 1 7.500-.500A3 3 0 0 1 11 9z" fill="#595c5e" stroke="none" /></Icon>
    </TrayItem>
    <TrayItem $width={27}>
      <Icon w={14} h={9} box="0 0 14 9"><path d="M3 9a3 3 0 0 1 0-5.500 4 4 0 0 1 7.500-.500A3 3 0 0 1 11 9z" fill="#0d3f66" stroke="none" /></Icon>
    </TrayItem>
    <TrayItem $width={27}>
      <Icon w={11} h={14} box="0 0 11 14"><path d="M3.500 3a2 2 0 0 1 4 0v4a2 2 0 0 1-4 0zM1 6.500c0 5.500 9 5.500 9 0M5.500 11v3" stroke="#3c5a66" /></Icon>
    </TrayItem>
    <TrayItem $width={38}>ENG<br />US</TrayItem>
    <TrayItem $width={24}>
      <Icon w={11} h={9} box="0 0 12 10"><path d="M.5 4a8 8 0 0 1 11 0M2.500 6a5 5 0 0 1 7 0M4.500 8a2 2 0 0 1 3 0L6 9.500z" /></Icon>
    </TrayItem>
    <TrayItem $width={15}>
      <Icon w={12} h={10} box="0 0 12 10"><path d="M.5 3.500h2l3-3v9l-3-3h-2zM7.500 3q1.500 2 0 4M9.500 1.500q3 3.500 0 7" /></Icon>
    </TrayItem>
    <TrayItem $width={28}>
      <Icon w={13} h={9} box="0 0 13 9"><path d="M.5.500h10v8H.500zM12 3v3" /><path d="M2 2h6v5H2z" fill="#53585a" stroke="none" /></Icon>
    </TrayItem>
    <TrayItem $width={54} $align="right">10:26 AM<br />7/29/2024</TrayItem>
    <TrayItem $width={22}>
      <Icon w={12} h={13} box="0 0 12 13"><path d="M0 10l1.500-2V5a4.500 4.500 0 0 1 9 0v3l1.500 2zM4 11h4l-2 2z" fill="#33525a" stroke="none" /></Icon>
    </TrayItem>
  </Tray>
);

const App = () => (
  <Page>
    <GlobalStyle />
    <Window>
      <Header />
      <Tabs />
      <RibbonBar />
      <Formula />
      <Workspace>
        <SheetView>
          <Grid />
        </SheetView>
        <VScroll>
          <Arrow $dir="up" />
          <Thumb />
          <Arrow $dir="down" />
        </VScroll>
      </Workspace>
      <SheetBar>
        <SheetNav>
          <PlainButton aria-label="Previous sheet"><AngleIcon /></PlainButton>
          <PlainButton aria-label="Next sheet"><AngleIcon right /></PlainButton>
        </SheetNav>
        <SheetTab>
          <span>Christmas Gifts</span>
        </SheetTab>
        <PlainButton $width={88} aria-label="New sheet"><PlusIcon /></PlainButton>
        <Spacer />
        <DotsIcon />
        <HScroll>
          <Arrow $dir="left" />
          <Thumb $flat />
          <Arrow $dir="right" />
        </HScroll>
      </SheetBar>
      <StatusBar>
        <StatusItem $after={15}>Ready</StatusItem>
        <StatusItem>
          <AccessibilityIcon />
          Accessibility: Good to go
        </StatusItem>
        <Spacer />
        <StatusItem $after={14}>Count: 7</StatusItem>
        <ViewButton $active aria-label="Normal view"><NormalViewIcon /></ViewButton>
        <ViewButton aria-label="Page layout view"><PageViewIcon /></ViewButton>
        <ViewButton aria-label="Page break view"><BreakViewIcon /></ViewButton>
        <PlainButton $width={16} aria-label="Zoom out">
          <Icon size={7} box="0 0 7 7"><path d="M0 3.500h7" /></Icon>
        </PlainButton>
        <ZoomRange type="range" defaultValue="47" aria-label="Zoom" />
        <PlainButton $width={8} aria-label="Zoom in"><PlusIcon size={7} /></PlainButton>
        <PlainButton $width={34}>100%</PlainButton>
      </StatusBar>
      <Taskbar>
        <TaskButton as="span">
          <WeatherIcon />
        </TaskButton>
        <TaskList>
          {TASKS.map((task) => (
            <TaskButton key={task.name} aria-label={task.name} $open={task.open} $current={task.current}>
              {task.icon}
            </TaskButton>
          ))}
        </TaskList>
        <SystemTray />
      </Taskbar>
    </Window>
  </Page>
);

export default App;
